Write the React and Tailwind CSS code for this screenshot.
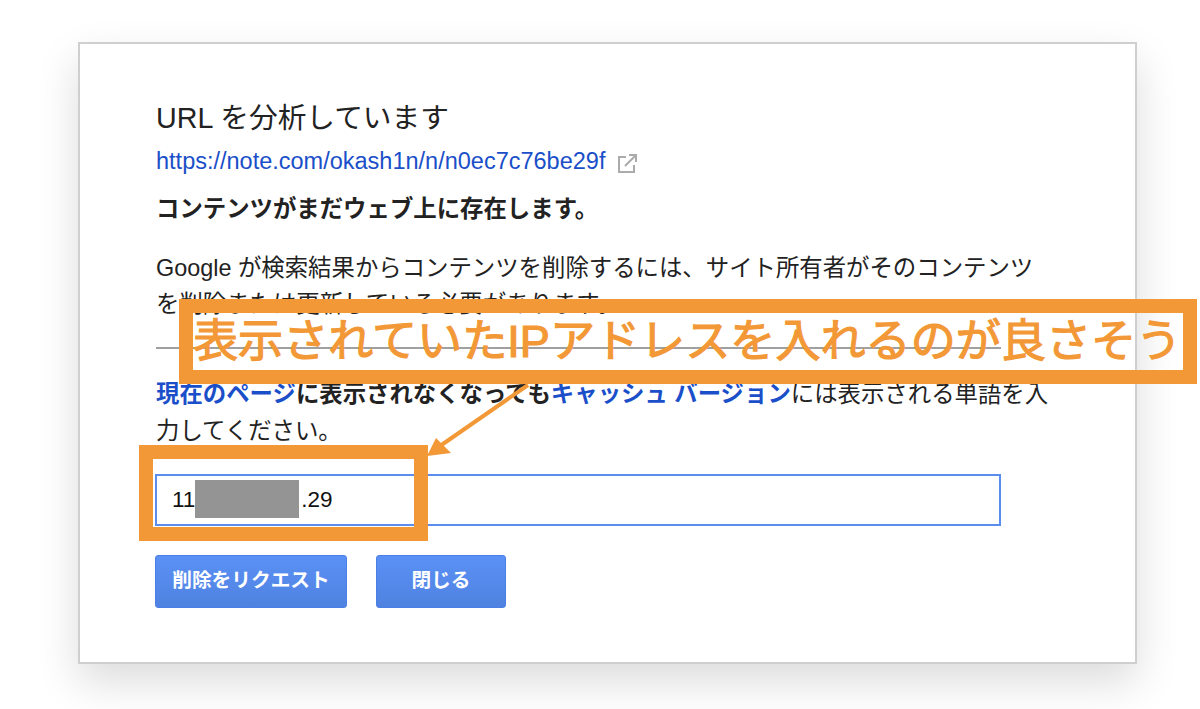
import React from 'react';

const fontStack = "font-['Liberation_Sans','Noto_Sans_CJK_JP',sans-serif]";

const App = () => {
  return (
    <div className={`relative w-[1200px] h-[709px] overflow-hidden bg-white pl-[78px] pt-[42px] ${fontStack}`}>
      <div className="w-[1059px] h-[622px] bg-white border-2 border-[#cfcfcf] pt-[56px] pl-[75px] text-[#222222] shadow-[0_18px_40px_rgba(0,0,0,0.14)]">
        <h1 className="text-[28.7px] leading-[36px] pl-px">URL を分析しています</h1>
        <div className="mt-[10px] flex items-center h-[30px] pl-px">
          <a className="text-[23.5px] leading-[30px] text-[#1a4fc9]">https://note.com/okash1n/n/n0ec7c76be29f</a>
          <svg className="ml-[12px] mt-[5px] w-[21px] h-[21px]" viewBox="0 0 21 21" fill="none" stroke="#ababab" strokeWidth="2">
            <path d="M9 4H2v15h15v-7" />
            <path d="M8 13L18 3M12 2h7v7" />
          </svg>
        </div>
        <p className="mt-[18px] pl-px text-[23.4px] leading-[30px] font-bold">コンテンツがまだウェブ上に存在します。</p>
        <p className="mt-[26px] pl-px w-[899px] text-[23.4px] leading-[36px]">
          Google が検索結果からコンテンツを削除するには、サイト所有者がそのコンテンツを削除または更新している必要があります。
        </p>
        <hr className="mt-[25px] ml-px w-[845px] border-t-2 border-[#a0a0a0]" />
        <p className="mt-[27px] pl-px w-[899px] text-[23.4px] leading-[37px]">
          <span className="font-bold">
            <a className="text-[#1a4fc9]">現在のページ</a>
            に表示されなくなっても
            <a className="text-[#1a4fc9]">キャッシュ バージョン</a>
          </span>
          には表示される単語を入力してください。
        </p>
        <div className="mt-[24px] w-[846px] h-[52px] border-2 border-[#5b8def] flex items-center pl-[15px] text-[22.5px] text-[#111111]">
          <span>11</span>
          <span className="w-[104px] h-[38px] mb-[2px] bg-[#949494]" />
          <span className="ml-[2px]">.29</span>
        </div>
        <div className="mt-[29px] flex gap-[29px]">
          <button className="w-[192px] h-[53px] pb-[2px] rounded-[3px] border border-[#4a7fe6] bg-gradient-to-b from-[#5b91f6] to-[#4f82e0] text-white font-bold text-[19.7px]">
            削除をリクエスト
          </button>
          <button className="w-[130px] h-[53px] pb-[2px] rounded-[3px] border border-[#4a7fe6] bg-gradient-to-b from-[#5b91f6] to-[#4f82e0] text-white font-bold text-[19.7px]">
            閉じる
          </button>
        </div>
      </div>

      {/* annotation over the screenshot */}
      <div className="absolute left-[179px] top-[299px] w-[1018px] h-[85px] border-[14px] border-[#f39836] flex items-center text-[#f39836] text-[45.1px] [-webkit-text-stroke:1.2px_#f39836] whitespace-nowrap">
        表示されていたIPアドレスを入れるのが良さそう
      </div>
      <div className="absolute left-[139px] top-[445px] w-[289px] h-[96px] border-[14px] border-[#f39836]" />
      <svg className="absolute left-[420px] top-[380px] w-[120px] h-[90px]" viewBox="0 0 120 90" fill="none">
        <path d="M108 5L20 66" stroke="#f39836" strokeWidth="4" />
        <path d="M7 76L16 58L31 73Z" fill="#f39836" />
      </svg>
    </div>
  );
};

export default App;
